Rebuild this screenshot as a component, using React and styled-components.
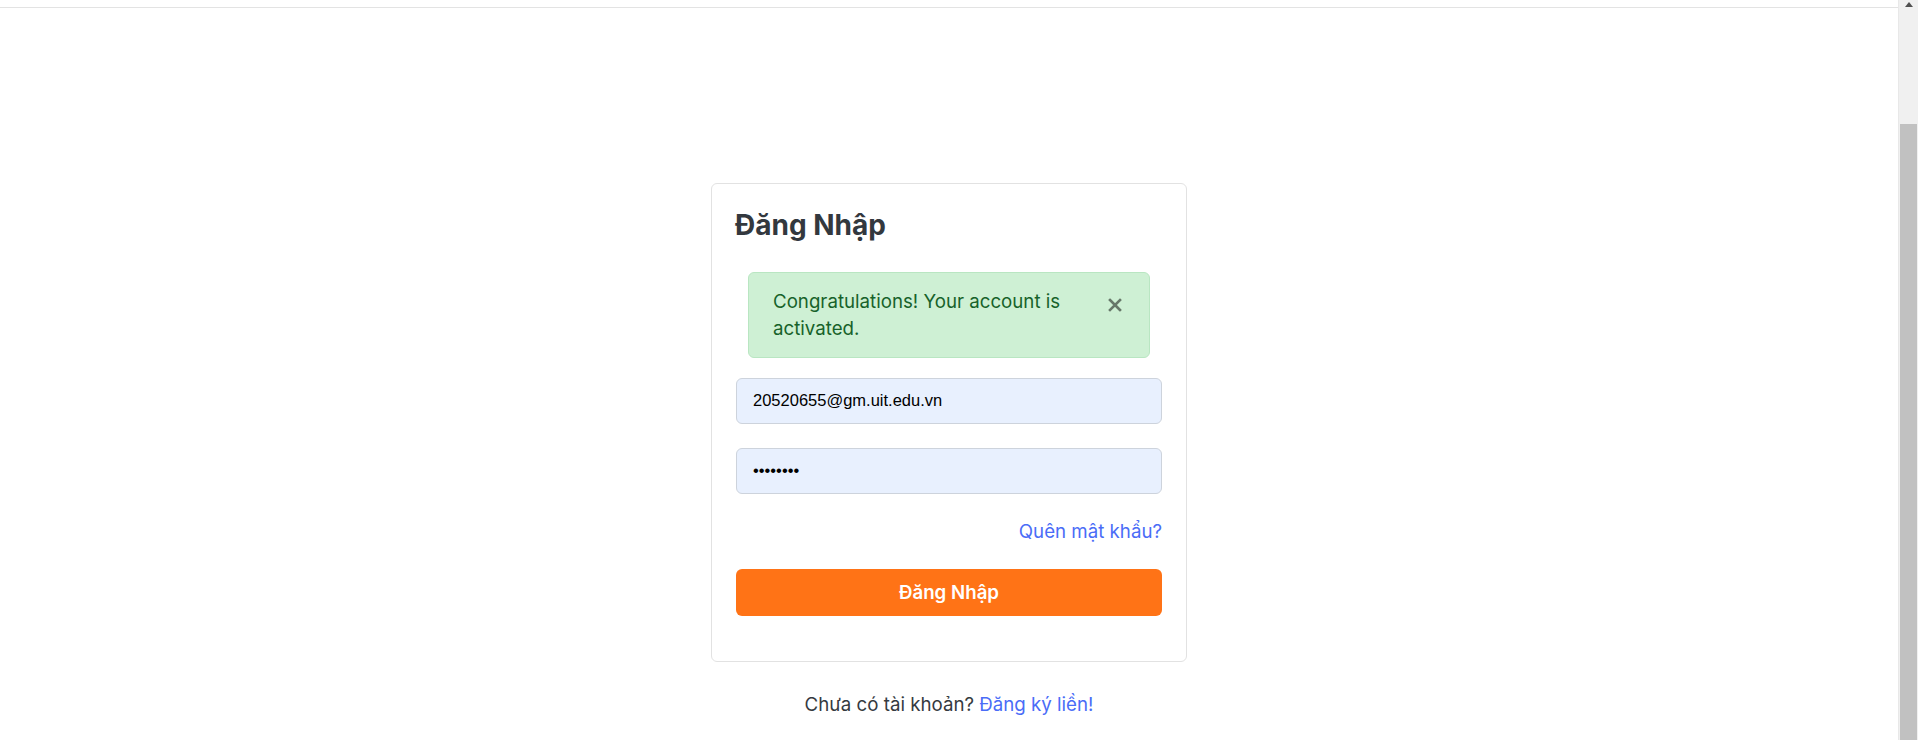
import React from 'react';
import styled, { createGlobalStyle } from 'styled-components';

const GlobalStyle = createGlobalStyle`
    html, body {
        margin: 0;
        padding: 0;
        height: 100%;
        overflow: hidden;
        background: #ffffff;
    }
    body {
        font-family: Inter, "Noto Sans", "Liberation Sans", sans-serif;
    }
    * {
        box-sizing: border-box;
    }
`;

const Screen = styled.div`
    display: flex;
    height: 740px;
`;

const Main = styled.main`
    flex: 1;
    display: flex;
    flex-direction: column;
    align-items: center;
`;

const HeaderEdge = styled.div`
    align-self: stretch;
    height: 8px;
    border-bottom: 1px solid #e3e3e3;
`;

const Card = styled.section`
    width: 476px;
    margin-top: 175px;
    padding: 25px 24px 45px;
    border: 1px solid #e2e2e2;
    border-radius: 6px;
    background: #ffffff;
    display: flex;
    flex-direction: column;
`;

const Title = styled.h3`
    margin: 0 0 0 -1px;
    font-size: 28px;
    line-height: 1.2;
    font-weight: 700;
    color: #33383e;
`;

const Alert = styled.div`
    position: relative;
    margin: 29px 12px 20px;
    padding: 15px 64px 15px 24px;
    border: 1px solid #b9e6c2;
    border-radius: 6px;
    background: #cef0d4;
    color: #17622a;
    font-size: 18.7px;
    line-height: 27px;
`;

const CloseButton = styled.button`
    position: absolute;
    top: 25px;
    right: 27px;
    width: 14px;
    height: 14px;
    padding: 0;
    border: 0;
    background: none;
    color: #000000;
    opacity: 0.5;
    cursor: pointer;
    display: flex;
`;

const Field = styled.input`
    height: 46px;
    padding: 0 16px;
    border: 1px solid #cdd3dc;
    border-radius: 6px;
    background: #e8f0fe;
    color: #000000;
    font-family: "Liberation Sans", Arial, sans-serif;
    font-size: 16.5px;
    outline: none;
    margin-top: ${(p) => (p.$spaced ? '24px' : '0')};
`;

const ForgotRow = styled.div`
    display: flex;
    justify-content: flex-end;
    margin-top: 24px;
    font-size: 18.7px;
    line-height: 27px;
`;

const Link = styled.a`
    color: #4a6cf7;
    text-decoration: none;
    cursor: pointer;
`;

const SubmitButton = styled.button`
    height: 47px;
    margin-top: 24px;
    border: 0;
    border-radius: 6px;
    background: #ff7316;
    color: #ffffff;
    font-family: inherit;
    font-size: 18.7px;
    font-weight: 600;
    cursor: pointer;
`;

const SignupLine = styled.p`
    margin: 29px 0 0;
    font-size: 18.7px;
    line-height: 27px;
    color: #353a40;
`;

const ScrollTrack = styled.div`
    width: 20px;
    display: flex;
    flex-direction: column;
    align-items: center;
    background: #f0f0f0;
    border-left: 1px solid #e8e8e8;
`;

const ScrollArrow = styled.div`
    margin-top: 2px;
    width: 0;
    height: 0;
    border-left: 4.5px solid transparent;
    border-right: 4.5px solid transparent;
    border-bottom: 5px solid #505050;
`;

const ScrollThumb = styled.div`
    align-self: stretch;
    flex: 1;
    margin: 117px 1px 0 1px;
    background: #c1c1c1;
`;

function CloseIcon() {
    return (
        <svg width="14" height="14" viewBox="0 0 14 14" fill="none">
            <path d="M2 2L12 12M12 2L2 12" stroke="currentColor" strokeWidth="2.6" strokeLinecap="square" />
        </svg>
    );
}

export default function App() {
    return (
        <>
            <GlobalStyle />
            <Screen>
                <Main>
                    <HeaderEdge />
                    <Card>
                        <Title>Đăng Nhập</Title>
                        <Alert>
                            Congratulations! Your account is activated.
                            <CloseButton aria-label="Close">
                                <CloseIcon />
                            </CloseButton>
                        </Alert>
                        <Field type="email" defaultValue="20520655@gm.uit.edu.vn" />
                        <Field type="password" defaultValue="12345678" $spaced />
                        <ForgotRow>
                            <Link>Quên mật khẩu?</Link>
                        </ForgotRow>
                        <SubmitButton>Đăng Nhập</SubmitButton>
                    </Card>
                    <SignupLine>
                        Chưa có tài khoản? <Link>Đăng ký liền!</Link>
                    </SignupLine>
                </Main>
                <ScrollTrack>
                    <ScrollArrow />
                    <ScrollThumb />
                </ScrollTrack>
            </Screen>
        </>
    );
}
